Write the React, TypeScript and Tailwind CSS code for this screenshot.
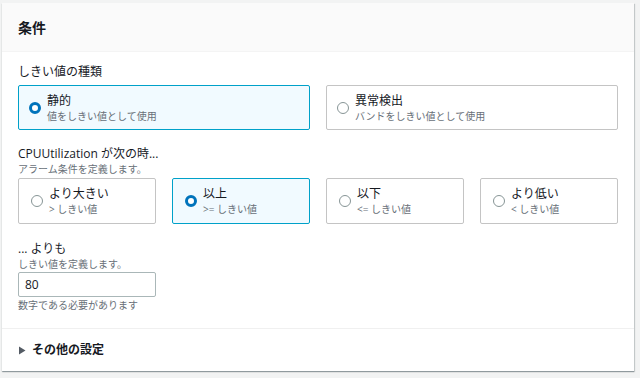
import React from "react";

function Radio({ checked }: { checked: boolean }) {
  return checked ? (
    <span className="inline-block w-[12px] h-[12px] rounded-full border-[3.5px] border-[#0073bb] bg-white shrink-0" />
  ) : (
    <span className="inline-block w-[12px] h-[12px] rounded-full border border-[#879596] bg-white shrink-0" />
  );
}

function Tile({ checked, title, desc, small }: { checked: boolean; title: string; desc: string; small?: boolean }) {
  return (
    <div
      className={
        "flex items-start gap-[6px] rounded-[2px] border " +
        (checked ? "border-[#00a1c9] bg-[#f1faff]" : "border-[#c4c4c4] bg-white") +
        " " +
        (small ? "pl-[12px] pt-[7px] h-[46px]" : "pl-[10px] pt-[7px] h-[45px]")
      }
    >
      <div className="pt-[3px]">
        <Radio checked={checked} />
      </div>
      <div className="flex flex-col">
        <span className="text-[12px] leading-[16px] text-[#16191f]">{title}</span>
        <span className="text-[10px] leading-[15px] text-[#687078]">{desc}</span>
      </div>
    </div>
  );
}

export default function App() {
  return (
    <div
      className="w-[640px] h-[378px] bg-[#f2f3f3] pl-[2px] pr-[6px] pt-[3px]"
      style={{ fontFamily: '"Open Sans", "Noto Sans CJK JP", sans-serif' }}
    >
      <div className="bg-white w-[632px] h-[368px] shadow-[0_1px_1px_rgba(0,28,36,0.3),1px_1px_1px_rgba(0,28,36,0.15)] flex flex-col">
        <div className="bg-[#fafafa] h-[49px] flex items-center px-[16px] border-b border-[#f4f4f4]">
          <span className="text-[14px] font-bold text-[#16191f]">条件</span>
        </div>
        <div className="px-[16px] pt-[12px] flex flex-col">
          <div className="text-[12px] leading-[16px] text-[#16191f] mb-[5px]">しきい値の種類</div>
          <div className="grid grid-cols-2 gap-[16px]">
            <Tile checked title="静的" desc="値をしきい値として使用" />
            <Tile checked={false} title="異常検出" desc="バンドをしきい値として使用" />
          </div>
          <div className="mt-[16px] text-[12px] leading-[16px] text-[#16191f]">CPUUtilization が次の時...</div>
          <div className="text-[10px] leading-[14px] text-[#687078] mb-[2px]">アラーム条件を定義します。</div>
          <div className="grid grid-cols-4 gap-[16px]">
            <Tile small checked={false} title="より大きい" desc="> しきい値" />
            <Tile small checked title="以上" desc=">= しきい値" />
            <Tile small checked={false} title="以下" desc="<= しきい値" />
            <Tile small checked={false} title="より低い" desc="< しきい値" />
          </div>
          <div className="mt-[17px] text-[12px] leading-[16px] text-[#16191f]">... よりも</div>
          <div className="text-[10px] leading-[14px] text-[#687078] mb-[1px]">しきい値を定義します。</div>
          <div className="w-[138px] h-[25px] border border-[#aab7b8] rounded-[2px] flex items-center px-[6px] text-[12px] text-[#16191f]">
            80
          </div>
          <div className="mt-[1px] text-[10px] leading-[14px] text-[#687078]">数字である必要があります</div>
        </div>
        <div className="mt-[16px] border-t border-[#f0f0f0] flex-1 flex items-center px-[16px] gap-[6px]">
          <svg width="8" height="9" viewBox="0 0 8 9" className="shrink-0">
            <path d="M1 0.5 L7.5 4.5 L1 8.5 Z" fill="#545b64" />
          </svg>
          <span className="text-[12px] font-bold text-[#16191f]">その他の設定</span>
        </div>
      </div>
    </div>
  );
}
